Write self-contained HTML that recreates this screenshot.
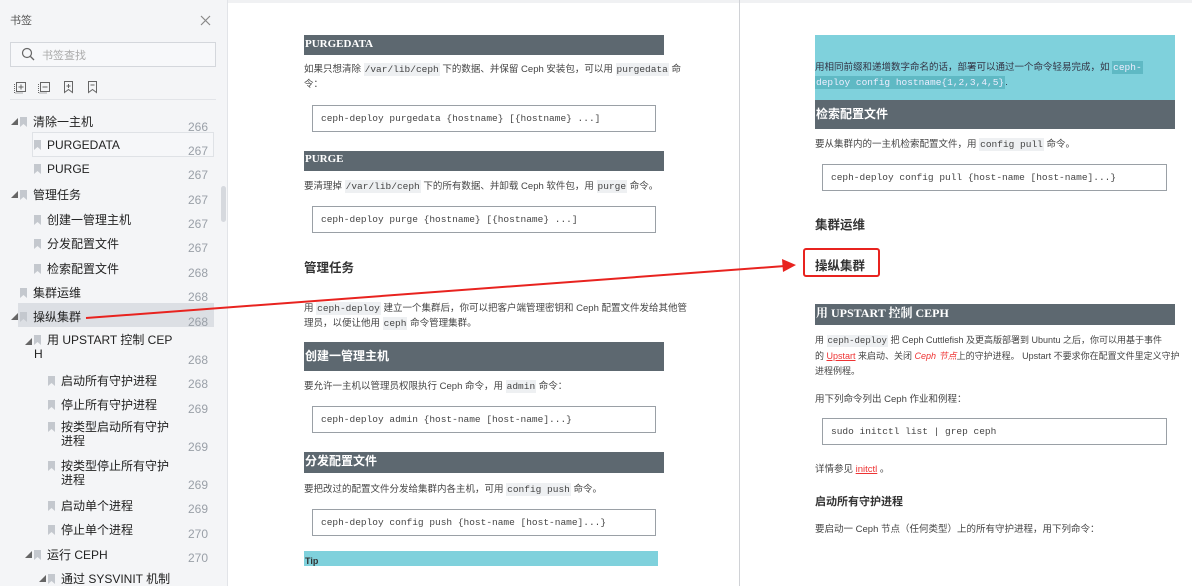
<!DOCTYPE html>
<html><head><meta charset="utf-8"><style>
*{margin:0;padding:0;box-sizing:border-box}
body{width:1192px;height:586px;overflow:hidden;background:#fff;position:relative;font-family:"Liberation Sans","Noto Sans CJK SC",sans-serif;color:#333}
.a{position:absolute;white-space:nowrap}
#sb{position:absolute;left:0;top:0;width:228px;height:586px;background:#f4f5f7;border-right:1px solid #e2e4e8}
.sbt{font-size:12px;color:#222}
.num{position:absolute;font-size:12px;color:#9aa0a8;right:19px}
.bm{display:inline-block;width:7px;height:10px;background:#c4c8ce;clip-path:polygon(0 0,100% 0,100% 100%,50% 70%,0 100%);vertical-align:-1px;margin-right:6px}
.tri{position:absolute;font-size:7px;color:#666}
.bar{position:absolute;background:#5d6870;color:#fff;font-weight:bold;font-size:11px;padding-left:1px}
.bars{font-family:"Liberation Serif","Noto Serif CJK SC",serif}
.t{position:absolute;font-size:9.5px;color:#444;white-space:nowrap}
.c{font-family:"Liberation Mono",monospace;background:#eef0f2;color:#444;padding:1px 1px}
.code{position:absolute;border:1px solid #9aa0a6;font-family:"Liberation Mono",monospace;font-size:9.5px;color:#444;padding-left:8px;display:flex;align-items:center}
.h{position:absolute;font-size:12.5px;font-weight:bold;color:#333}
.r{color:#e33}
</style></head><body>
<div id="sb">
<div class="a sbt" style="left:10px;top:12px;color:#555;font-size:11px">书签</div>
<svg class="a" style="left:200px;top:15px" width="11" height="11"><path d="M1 1L10 10M10 1L1 10" stroke="#888" stroke-width="1.2"/></svg>
<div class="a" style="left:10px;top:42px;width:206px;height:25px;border:1px solid #d4d7dc;background:#f7f8fa"></div>
<svg class="a" style="left:21px;top:47px" width="14" height="14"><circle cx="6" cy="6" r="4.5" stroke="#666" fill="none" stroke-width="1.2"/><path d="M9.5 9.5L13 13" stroke="#666" stroke-width="1.3"/></svg>
<div class="a" style="left:42px;top:47px;font-size:11px;color:#aaa">书签查找</div>
<svg class="a" style="left:14px;top:80px" width="90" height="14" fill="none" stroke="#666" stroke-width="1">
<rect x="2.5" y="2.5" width="9" height="9"/><path d="M7 4.5v5M4.5 7h5"/><path d="M0.5 4v9h9" stroke-dasharray="1 1"/>
<rect x="26.5" y="2.5" width="9" height="9"/><path d="M28.5 7h5"/><path d="M24.5 4v9h9" stroke-dasharray="1 1"/>
<path d="M50.5 1.5h8v11l-4-3-4 3z"/><path d="M54.5 4v4M52.5 6h4"/>
<path d="M74.5 1.5h8v11l-4-3-4 3z"/><path d="M76.5 5h4"/>
</svg>
<div class="a" style="left:10px;top:99px;width:206px;height:1px;background:#e2e4e8"></div>
<div class="a" style="left:32px;top:132px;width:182px;height:25px;border:1px solid #dfe2e6;background:#f6f7f9"></div>
<div class="a" style="left:18px;top:303px;width:196px;height:24px;background:#dcdfe4"></div>
<div class="a" style="left:221px;top:186px;width:5px;height:36px;background:#d6d9de;border-radius:3px"></div>

<div class="tri" style="left:11px;top:117px">◢</div><div class="a sbt" style="left:20px;top:113px"><span class="bm"></span>清除一主机</div><div class="num" style="top:120px">266</div>
<div class="a sbt" style="left:34px;top:138px"><span class="bm"></span>PURGEDATA</div><div class="num" style="top:144px">267</div>
<div class="a sbt" style="left:34px;top:162px"><span class="bm"></span>PURGE</div><div class="num" style="top:168px">267</div>
<div class="tri" style="left:11px;top:190px">◢</div><div class="a sbt" style="left:20px;top:186px"><span class="bm"></span>管理任务</div><div class="num" style="top:193px">267</div>
<div class="a sbt" style="left:34px;top:211px"><span class="bm"></span>创建一管理主机</div><div class="num" style="top:217px">267</div>
<div class="a sbt" style="left:34px;top:235px"><span class="bm"></span>分发配置文件</div><div class="num" style="top:241px">267</div>
<div class="a sbt" style="left:34px;top:260px"><span class="bm"></span>检索配置文件</div><div class="num" style="top:266px">268</div>
<div class="a sbt" style="left:20px;top:284px"><span class="bm"></span>集群运维</div><div class="num" style="top:290px">268</div>
<div class="tri" style="left:11px;top:312px">◢</div><div class="a sbt" style="left:20px;top:308px"><span class="bm"></span>操纵集群</div><div class="num" style="top:315px">268</div>
<div class="tri" style="left:25px;top:337px">◢</div><div class="a sbt" style="left:34px;top:333px;line-height:14px"><span class="bm"></span>用 UPSTART 控制 CEP<br>H</div><div class="num" style="top:353px">268</div>
<div class="a sbt" style="left:48px;top:372px"><span class="bm"></span>启动所有守护进程</div><div class="num" style="top:377px">268</div>
<div class="a sbt" style="left:48px;top:396px"><span class="bm"></span>停止所有守护进程</div><div class="num" style="top:402px">269</div>
<div class="a sbt" style="left:48px;top:420px;line-height:14px"><span class="bm"></span>按类型启动所有守护<br><span style="margin-left:13px">进程</span></div><div class="num" style="top:440px">269</div>
<div class="a sbt" style="left:48px;top:459px;line-height:14px"><span class="bm"></span>按类型停止所有守护<br><span style="margin-left:13px">进程</span></div><div class="num" style="top:478px">269</div>
<div class="a sbt" style="left:48px;top:497px"><span class="bm"></span>启动单个进程</div><div class="num" style="top:502px">269</div>
<div class="a sbt" style="left:48px;top:521px"><span class="bm"></span>停止单个进程</div><div class="num" style="top:527px">270</div>
<div class="tri" style="left:25px;top:550px">◢</div><div class="a sbt" style="left:34px;top:546px"><span class="bm"></span>运行 CEPH</div><div class="num" style="top:551px">270</div>
<div class="tri" style="left:39px;top:574px">◢</div><div class="a sbt" style="left:48px;top:570px"><span class="bm"></span>通过 SYSVINIT 机制</div>
</div>
<div class="a" style="left:228px;top:0;width:964px;height:3px;background:#f0f1f3"></div>
<div class="a" style="left:739px;top:0;width:1px;height:586px;background:#d0d2d6"></div>

<!-- left page -->
<div class="bar bars" style="left:304px;top:35px;width:360px;height:20px;line-height:18px">PURGEDATA</div>
<div class="t" style="left:304px;top:62px;line-height:15px">如果只想清除 <span class="c">/var/lib/ceph</span> 下的数据、并保留 Ceph 安装包，可以用 <span class="c">purgedata</span> 命<br>令：</div>
<div class="code" style="left:312px;top:105px;width:344px;height:27px">ceph-deploy purgedata {hostname} [{hostname} ...]</div>
<div class="bar bars" style="left:304px;top:151px;width:360px;height:20px;line-height:16px">PURGE</div>
<div class="t" style="left:304px;top:178px">要清理掉 <span class="c">/var/lib/ceph</span> 下的所有数据、并卸载 Ceph 软件包，用 <span class="c">purge</span> 命令。</div>
<div class="code" style="left:312px;top:206px;width:344px;height:27px">ceph-deploy purge {hostname} [{hostname} ...]</div>
<div class="h" style="left:304px;top:257px">管理任务</div>
<div class="t" style="left:304px;top:301px;line-height:15px">用 <span class="c">ceph-deploy</span> 建立一个集群后，你可以把客户端管理密钥和 Ceph 配置文件发给其他管<br>理员，以便让他用 <span class="c">ceph</span> 命令管理集群。</div>
<div class="bar" style="left:304px;top:342px;width:360px;height:29px;line-height:29px;font-size:12px">创建一管理主机</div>
<div class="t" style="left:304px;top:378px">要允许一主机以管理员权限执行 Ceph 命令，用 <span class="c">admin</span> 命令：</div>
<div class="code" style="left:312px;top:406px;width:344px;height:27px">ceph-deploy admin {host-name [host-name]...}</div>
<div class="bar" style="left:304px;top:452px;width:360px;height:21px;line-height:18px;font-size:12px">分发配置文件</div>
<div class="t" style="left:304px;top:481px">要把改过的配置文件分发给集群内各主机，可用 <span class="c">config push</span> 命令。</div>
<div class="code" style="left:312px;top:509px;width:344px;height:27px">ceph-deploy config push {host-name [host-name]...}</div>
<div class="a" style="left:304px;top:551px;width:354px;height:15px;background:#7fd1dc;font-size:9px;font-weight:bold;color:#333;line-height:20px;padding-left:1px">Tip</div>

<!-- right page -->
<div class="a" style="left:815px;top:35px;width:360px;height:65px;background:#7fd1dc"></div>
<div class="t" style="left:815px;top:60px;line-height:15px;color:#334">用相同前缀和递增数字命名的话，部署可以通过一个命令轻易完成，如 <span class="c" style="background:#5fb9c4;color:#eef">ceph-</span><br><span class="c" style="background:#5fb9c4;color:#eef">deploy config hostname{1,2,3,4,5}</span>.</div>
<div class="bar" style="left:815px;top:100px;width:360px;height:29px;line-height:28px;font-size:12px">检索配置文件</div>
<div class="t" style="left:815px;top:136px">要从集群内的一主机检索配置文件，用 <span class="c">config pull</span> 命令。</div>
<div class="code" style="left:822px;top:164px;width:345px;height:27px">ceph-deploy config pull {host-name [host-name]...}</div>
<div class="h" style="left:815px;top:214px">集群运维</div>
<div class="a" style="left:803px;top:248px;width:77px;height:29px;border:2px solid #e8231f;border-radius:3px"></div>
<div class="h" style="left:815px;top:255px">操纵集群</div>
<div class="bar bars" style="left:815px;top:304px;width:360px;height:21px;line-height:18px;font-size:12px">用 UPSTART 控制 CEPH</div>
<div class="t" style="left:815px;top:333px;line-height:15px;font-size:9px">用 <span class="c">ceph-deploy</span> 把 Ceph Cuttlefish 及更高版部署到 Ubuntu 之后，你可以用基于事件<br>的 <u class="r">Upstart</u> 来启动、关闭 <i class="r">Ceph 节点</i>上的守护进程。 Upstart 不要求你在配置文件里定义守护<br>进程例程。</div>
<div class="t" style="left:815px;top:391px">用下列命令列出 Ceph 作业和例程：</div>
<div class="code" style="left:822px;top:418px;width:345px;height:27px">sudo initctl list | grep ceph</div>
<div class="t" style="left:815px;top:461px">详情参见 <u class="r">initctl</u> 。</div>
<div class="a" style="left:815px;top:493px;font-size:11px;font-weight:bold;color:#333">启动所有守护进程</div>
<div class="t" style="left:815px;top:521px">要启动一 Ceph 节点（任何类型）上的所有守护进程，用下列命令：</div>

<svg class="a" style="left:0;top:0" width="1192" height="586"><path d="M86 318L785 266" stroke="#e8231f" stroke-width="2"/><path d="M796 265L782 259L783 272Z" fill="#e8231f"/></svg>
</body></html>
